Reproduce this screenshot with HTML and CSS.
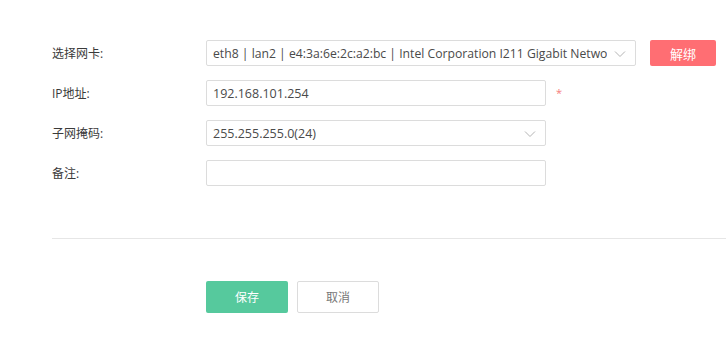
FILE: index.html
```html
<!DOCTYPE html>
<html>
<head>
<meta charset="utf-8">
<link rel="stylesheet" href="styles.css">
</head>
<body>
<div class="page">
  <div class="form">
    <div class="row">
      <label class="label">选择网卡:</label>
      <div class="select wide">
        <span class="value">eth8 | lan2 | e4:3a:6e:2c:a2:bc | Intel Corporation I211 Gigabit Network Connection</span>
        <svg class="chev" width="12" height="8" viewBox="0 0 12 8"><path d="M1 1.5 L6 6.5 L11 1.5" fill="none" stroke="#b4b4b4" stroke-width="1"/></svg>
      </div>
      <button class="btn danger">解绑</button>
    </div>
    <div class="row">
      <label class="label">IP地址:</label>
      <div class="input"><span class="value">192.168.101.254</span></div>
      <span class="req">*</span>
    </div>
    <div class="row">
      <label class="label">子网掩码:</label>
      <div class="select">
        <span class="value">255.255.255.0(24)</span>
        <svg class="chev" width="12" height="8" viewBox="0 0 12 8"><path d="M1 1.5 L6 6.5 L11 1.5" fill="none" stroke="#b4b4b4" stroke-width="1"/></svg>
      </div>
    </div>
    <div class="row">
      <label class="label">备注:</label>
      <div class="input"></div>
    </div>
  </div>
  <div class="divider"></div>
  <div class="actions">
    <button class="btn primary">保存</button>
    <button class="btn ghost">取消</button>
  </div>
</div>
</body>
</html>
```
FILE: styles.css
```css
* { box-sizing: border-box; }
html, body { margin: 0; padding: 0; background: #fff; }
body {
  font-family: "Open Sans", "Noto Sans CJK SC", sans-serif;
  font-size: 12px;
  color: #333;
}
.page { padding-top: 40px; }
.form {
  display: flex;
  flex-direction: column;
  gap: 14px;
  padding-left: 52px;
}
.row {
  display: flex;
  align-items: center;
  height: 26px;
}
.label {
  width: 154px;
  flex: none;
  color: #3a3a3a;
  font-size: 12px;
}
.select, .input {
  position: relative;
  width: 340px;
  height: 26px;
  border: 1px solid #dcdcdc;
  border-radius: 2px;
  display: flex;
  align-items: center;
  padding: 0 28px 0 6px;
  background: #fff;
}
.input { padding-right: 6px; }
.select.wide { width: 430px; }
.value {
  white-space: nowrap;
  overflow: hidden;
  color: #4a4a4a;
  font-size: 12.5px;
}
.wide .value { font-size: 12.2px; }
.chev {
  position: absolute;
  right: 9px;
  top: 9px;
}
.req {
  color: #f57c7c;
  margin-left: 10px;
  font-size: 11px;
  margin-top: -2px;
}
.btn {
  font-family: inherit;
  font-size: 12px;
  border-radius: 2px;
  cursor: pointer;
}
.danger {
  margin-left: 14px;
  width: 66px;
  height: 26px;
  border: none;
  background: #ff6e73;
  color: #fff;
  font-size: 13px;
}
.divider {
  margin-top: 52px;
  margin-left: 52px;
  height: 1px;
  background: #e6e6e6;
}
.actions {
  display: flex;
  gap: 9px;
  padding-left: 206px;
  margin-top: 42px;
}
.actions .btn {
  width: 82px;
  height: 32px;
}
.primary {
  background: #56c99d;
  color: #fff;
  border: none;
}
.ghost {
  background: #fff;
  color: #777;
  border: 1px solid #dcdcdc;
}
```
